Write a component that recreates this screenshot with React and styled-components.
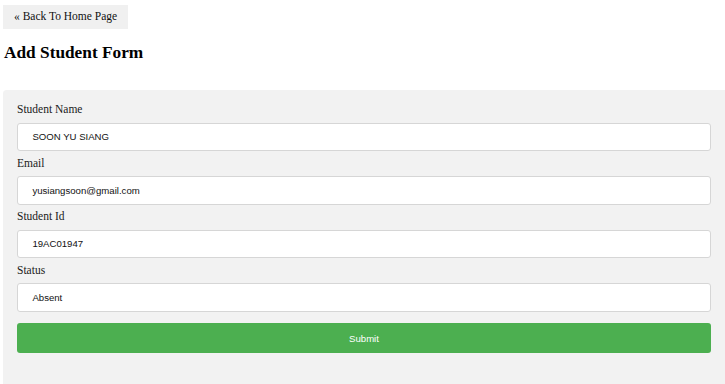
import React from "react";
import styled, { createGlobalStyle } from "styled-components";

const Global = createGlobalStyle`
  html, body { margin: 0; padding: 0; background: #ffffff; overflow: hidden; }
  body { font-family: "Liberation Serif", "Times New Roman", serif; color: #111; }
  * { box-sizing: border-box; }
`;

const Page = styled.div`
  padding: 5px 0 0 3px;
  display: flex;
  flex-direction: column;
  align-items: flex-start;
`;

const BackButton = styled.button`
  font-family: "Liberation Serif", "Times New Roman", serif;
  font-size: 11.5px;
  line-height: 13.4px;
  color: #111;
  background: #f0f0f0;
  border: none;
  padding: 5.3px 10px 5.3px 11px;
  width: 125px;
  text-align: left;
  cursor: pointer;
`;

const Title = styled.h2`
  font-family: "Liberation Serif", "Times New Roman", serif;
  font-size: 17.3px;
  line-height: 20px;
  font-weight: bold;
  margin: 14px 0 26.5px 1px;
  color: #000;
`;

const Panel = styled.div`
  align-self: stretch;
  margin-right: -4px;
  background: #f2f2f2;
  border-radius: 3.6px;
  padding: 13.8px 18px 40px 14px;
`;

const Form = styled.form`
  display: flex;
  flex-direction: column;
`;

const Label = styled.label`
  font-family: "Liberation Serif", "Times New Roman", serif;
  font-size: 11.5px;
  line-height: 13.4px;
  color: #1a1a1a;
`;

const Input = styled.input`
  font-family: "Liberation Sans", Arial, sans-serif;
  font-size: 9.6px;
  color: #111;
  height: 28.6px;
  width: 100%;
  margin: 5.8px 0;
  padding: 0 14.4px;
  border: 1px solid #d6d6d6;
  border-radius: 3px;
  background: #fff;
  outline: none;
`;

const Submit = styled.button`
  font-family: "Liberation Sans", Arial, sans-serif;
  font-size: 9.6px;
  color: #fff;
  background: #4caf50;
  border: none;
  border-radius: 3px;
  height: 30px;
  width: 100%;
  margin-top: 5.8px;
  cursor: pointer;
`;

const fields = [
  { label: "Student Name", value: "SOON YU SIANG" },
  { label: "Email", value: "yusiangsoon@gmail.com" },
  { label: "Student Id", value: "19AC01947" },
  { label: "Status", value: "Absent" },
];

export default function App() {
  return (
    <>
      <Global />
      <Page>
        <BackButton>« Back To Home Page</BackButton>
        <Title>Add Student Form</Title>
        <Panel>
          <Form onSubmit={(e) => e.preventDefault()}>
            {fields.map((f) => (
              <React.Fragment key={f.label}>
                <Label>{f.label}</Label>
                <Input type="text" defaultValue={f.value} />
              </React.Fragment>
            ))}
            <Submit type="submit">Submit</Submit>
          </Form>
        </Panel>
      </Page>
    </>
  );
}
